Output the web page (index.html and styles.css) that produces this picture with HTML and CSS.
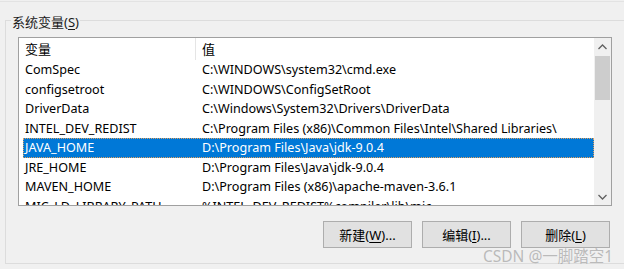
FILE: index.html
```html
<!DOCTYPE html>
<html lang="zh-CN">
<head>
    <meta charset="UTF-8">
    <title>系统变量</title>
    <link rel="stylesheet" href="styles.css">
</head>
<body>

<div class="top-line"></div>

<fieldset class="group">
    <legend>系统变量(<u>S</u>)</legend>

    <div class="listbox">
        <div class="list-main">
            <div class="list-header">
                <div class="col-name">变量</div>
                <div class="col-value">值</div>
            </div>
            <div class="list-rows">
                <div class="row"><div class="cell-name">ComSpec</div><div class="cell-value">C:\WINDOWS\system32\cmd.exe</div></div>
                <div class="row"><div class="cell-name">configsetroot</div><div class="cell-value">C:\WINDOWS\ConfigSetRoot</div></div>
                <div class="row"><div class="cell-name">DriverData</div><div class="cell-value">C:\Windows\System32\Drivers\DriverData</div></div>
                <div class="row"><div class="cell-name">INTEL_DEV_REDIST</div><div class="cell-value">C:\Program Files (x86)\Common Files\Intel\Shared Libraries\</div></div>
                <div class="row selected"><div class="cell-name">JAVA_HOME</div><div class="cell-value">D:\Program Files\Java\jdk-9.0.4</div></div>
                <div class="row"><div class="cell-name">JRE_HOME</div><div class="cell-value">D:\Program Files\Java\jdk-9.0.4</div></div>
                <div class="row"><div class="cell-name">MAVEN_HOME</div><div class="cell-value">D:\Program Files (x86)\apache-maven-3.6.1</div></div>
                <div class="row"><div class="cell-name">MIC_LD_LIBRARY_PATH</div><div class="cell-value">%INTEL_DEV_REDIST%compiler\lib\mic</div></div>
            </div>
        </div>
        <div class="scrollbar">
            <div class="scroll-btn">
                <svg width="9" height="6" viewBox="0 0 9 6"><path d="M0.5 5 L4.5 1 L8.5 5" fill="none" stroke="#606060" stroke-width="1.3"/></svg>
            </div>
            <div class="scroll-track">
                <div class="scroll-thumb"></div>
            </div>
            <div class="scroll-btn">
                <svg width="9" height="6" viewBox="0 0 9 6"><path d="M0.5 1 L4.5 5 L8.5 1" fill="none" stroke="#606060" stroke-width="1.3"/></svg>
            </div>
        </div>
    </div>

    <div class="buttons">
        <button>新建(<u>W</u>)...</button>
        <button>编辑(<u>I</u>)...</button>
        <button>删除(<u>L</u>)</button>
    </div>
</fieldset>

<div class="watermark">CSDN @一脚踏空1</div>

</body>
</html>
```

FILE: styles.css
```css
body {
    font-family: "Noto Sans", "Noto Sans CJK SC", sans-serif;
    font-size: 13px;
    background-color: #F0F0F0;
    color: #000000;
    margin: 0;
    padding: 0;
    width: 624px;
    height: 269px;
    overflow: hidden;
    position: relative;
}

.top-line {
    height: 1px;
    margin-top: 1px;
    background-color: #E3E3E3;
}

.group {
    margin: 9px 0 0 5px;
    padding: 0 0 15px 0;
    border: 1px solid #DCDCDC;
    border-right: none;
    width: 640px;
    box-sizing: border-box;
    height: 253px;
}

.group legend {
    margin-left: 5px;
    padding: 3px 1px 0 1px;
    line-height: 16px;
    color: #1A1A1A;
}

.group legend u,
.buttons u {
    text-underline-offset: 2px;
}

.listbox {
    display: flex;
    margin: 7px 0 0 12px;
    width: 594px;
    height: 169px;
    box-sizing: border-box;
    border: 1px solid #A0A0A0;
    background-color: #FFFFFF;
}

.list-main {
    flex: 1;
    display: flex;
    flex-direction: column;
    overflow: hidden;
    font-size: 12.6px;
}

.list-header {
    display: flex;
    height: 22px;
    line-height: 22px;
    padding-left: 4px;
    flex-shrink: 0;
    font-size: 13px;
}

.list-header .col-name {
    width: 170px;
    padding-left: 2px;
    border-right: 1px solid #E5E5E5;
}

.list-header .col-value {
    padding-left: 6px;
}

.list-rows {
    overflow: hidden;
}

.row {
    display: flex;
    height: 19.5px;
    line-height: 19.5px;
    margin-left: 4px;
    white-space: nowrap;
    box-sizing: border-box;
}

.cell-name {
    width: 175px;
    padding-left: 2px;
    flex-shrink: 0;
}

.cell-value {
    padding-left: 2px;
}

.row.selected {
    background-color: #0078D7;
    color: #FFFFFF;
    outline: 1px dotted #E0A060;
    outline-offset: -1px;
}

.scrollbar {
    width: 17px;
    display: flex;
    flex-direction: column;
    background-color: #F0F0F0;
}

.scroll-btn {
    height: 17px;
    display: flex;
    align-items: center;
    justify-content: center;
}

.scroll-track {
    flex: 1;
    padding: 1px 1px 0 1px;
}

.scroll-thumb {
    height: 44px;
    background-color: #CDCDCD;
}

.buttons {
    display: flex;
    justify-content: flex-start;
    gap: 10px;
    margin: 15px 0 0 317px;
}

.buttons button {
    width: 89px;
    height: 27px;
    font-family: "Noto Sans", "Noto Sans CJK SC", sans-serif;
    font-size: 13px;
    color: #000000;
    background-color: #E1E1E1;
    border: 1px solid #ADADAD;
    padding: 0;
}

.watermark {
    position: absolute;
    left: 483px;
    top: 245px;
    font-size: 15.5px;
    line-height: 22px;
    color: rgba(140, 140, 140, 0.55);
    white-space: nowrap;
}
```
